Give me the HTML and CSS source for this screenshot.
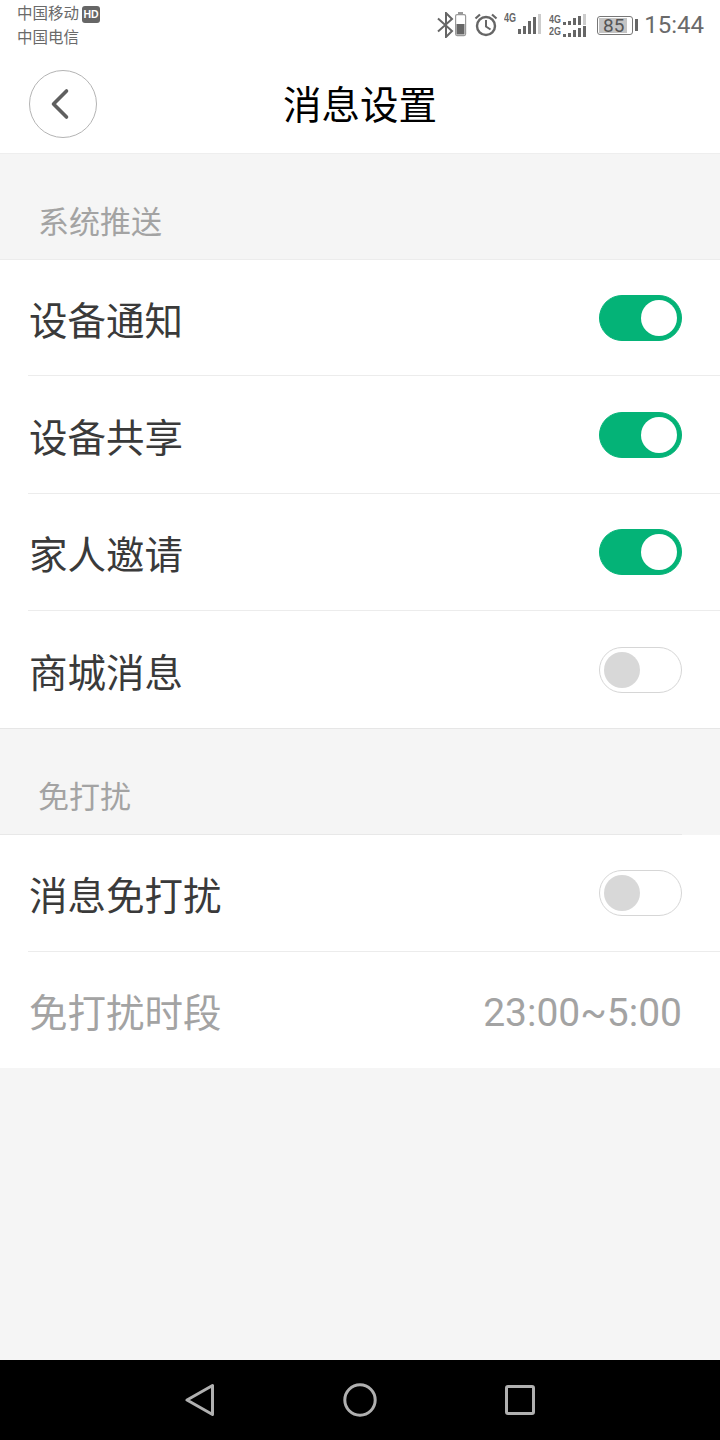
FILE: index.html
```html
<!DOCTYPE html>
<html lang="zh-CN">
<head>
    <meta charset="UTF-8">
    <meta name="viewport" content="width=device-width, initial-scale=1.0">
    <title>消息设置</title>
    <link rel="stylesheet" href="styles.css">
</head>
<body>
<div class="screen">

    <!-- Status bar -->
    <div class="status-bar">
        <div class="carriers">
            <div class="carrier">中国移动<span class="hd">HD</span></div>
            <div class="carrier">中国电信</div>
        </div>
        <div class="status-right">
            <svg class="st-icon" width="32" height="26" viewBox="0 0 32 26">
                <path d="M2 6.500L16 19l-6 6V1l6 6L2 19.500" fill="none" stroke="#666" stroke-width="2"/>
                <rect x="19.600" y="2.600" width="10" height="21" rx="1.500" fill="none" stroke="#999" stroke-width="1.200"/>
                <rect x="22" y="0" width="5" height="2" fill="#999"/>
                <rect x="20.500" y="12" width="8" height="10.500" fill="#666"/>
            </svg>
            <svg class="st-icon alarm" width="24" height="26" viewBox="0 0 24 26">
                <circle cx="12" cy="14" r="9" fill="none" stroke="#666" stroke-width="2.400"/>
                <path d="M12 8V14.500L16.500 17.500" fill="none" stroke="#666" stroke-width="2"/>
                <path d="M1.500 6.500L6 2.500M22.500 6.500L18 2.500" fill="none" stroke="#666" stroke-width="2.200"/>
            </svg>
            <div class="signal sig-single">
                <span class="net">4G</span>
                <svg width="24" height="24" viewBox="0 0 24 24">
                    <rect x="0" y="16" width="3" height="5" fill="#666"/>
                    <rect x="5" y="13" width="3" height="8" fill="#666"/>
                    <rect x="10" y="8" width="3" height="13" fill="#666"/>
                    <rect x="15" y="4" width="3" height="17" fill="#666"/>
                    <rect x="20" y="1" width="3" height="20" fill="#ccc"/>
                </svg>
            </div>
            <div class="signal sig-double">
                <div class="sig-row">
                    <span class="net">4G</span>
                    <svg width="26" height="11" viewBox="0 0 26 11">
                        <rect x="1" y="8" width="3" height="3" fill="#666"/>
                        <rect x="6" y="7" width="3" height="4" fill="#666"/>
                        <rect x="11" y="4" width="3" height="7" fill="#666"/>
                        <rect x="16" y="2" width="3" height="9" fill="#666"/>
                        <rect x="21" y="0" width="3" height="11" fill="#ccc"/>
                    </svg>
                </div>
                <div class="sig-row">
                    <span class="net">2G</span>
                    <svg width="26" height="11" viewBox="0 0 26 11">
                        <rect x="1" y="8" width="3" height="3" fill="#666"/>
                        <rect x="6" y="7" width="3" height="4" fill="#666"/>
                        <rect x="11" y="4" width="3" height="7" fill="#666"/>
                        <rect x="16" y="2" width="3" height="9" fill="#666"/>
                        <rect x="21" y="0" width="3" height="11" fill="#666"/>
                    </svg>
                </div>
            </div>
            <div class="battery">
                <div class="battery-body">
                    <div class="battery-fill"></div>
                    <span class="battery-num">85</span>
                </div>
                <div class="battery-tip"></div>
            </div>
            <span class="clock">15:44</span>
        </div>
    </div>

    <!-- Header -->
    <div class="header">
        <div class="back-btn">
            <svg width="20" height="32" viewBox="0 0 20 32">
                <path d="M16.500 3L3.500 16l13 13" fill="none" stroke="#5f5f5f" stroke-width="3.600" stroke-linecap="round" stroke-linejoin="round"/>
            </svg>
        </div>
        <h1 class="title">消息设置</h1>
    </div>

    <!-- Content -->
    <div class="content">
        <div class="section-title">系统推送</div>
        <div class="group">
            <div class="row"><span class="row-label">设备通知</span><div class="switch on"></div></div>
            <div class="row"><span class="row-label">设备共享</span><div class="switch on"></div></div>
            <div class="row"><span class="row-label">家人邀请</span><div class="switch on"></div></div>
            <div class="row last"><span class="row-label">商城消息</span><div class="switch"></div></div>
        </div>

        <div class="section-title">免打扰</div>
        <div class="section-line"></div>
        <div class="group second">
            <div class="row"><span class="row-label">消息免打扰</span><div class="switch"></div></div>
            <div class="row last muted"><span class="row-label">免打扰时段</span><span class="row-value">23:00~5:00</span></div>
        </div>
    </div>

    <!-- Navigation bar -->
    <div class="nav-bar">
        <svg width="30" height="34" viewBox="0 0 30 34">
            <path d="M27.500 2.500V31.500L2 17Z" fill="none" stroke="#b0b0b0" stroke-width="3" stroke-linejoin="round"/>
        </svg>
        <svg width="34" height="34" viewBox="0 0 34 34">
            <circle cx="17" cy="17" r="15.200" fill="none" stroke="#b0b0b0" stroke-width="3"/>
        </svg>
        <svg width="30" height="30" viewBox="0 0 30 30">
            <rect x="1.500" y="1.500" width="27" height="27" rx="1.500" fill="none" stroke="#b0b0b0" stroke-width="3"/>
        </svg>
    </div>
</div>
</body>
</html>
```

FILE: styles.css
```css
body {
    margin: 0;
    padding: 0;
    background-color: #f5f5f5;
    font-family: "Liberation Sans", "Noto Sans CJK SC", sans-serif;
}

.screen {
    width: 720px;
    height: 1440px;
    display: flex;
    flex-direction: column;
    overflow: hidden;
}

/* Status bar */
.status-bar {
    height: 50px;
    background-color: #fff;
    display: flex;
    justify-content: space-between;
    padding: 0 16px 0 17px;
    box-sizing: border-box;
}

.carriers {
    padding-top: 2px;
    color: #6a6a6a;
    font-size: 15.500px;
    line-height: 24px;
}

.carrier {
    display: flex;
    align-items: center;
}

.hd {
    margin-left: 3px;
    width: 18px;
    height: 17px;
    background-color: #666;
    color: #fff;
    border-radius: 3px;
    font-size: 10.500px;
    font-weight: bold;
    line-height: 17px;
    text-align: center;
}

.status-right {
    display: flex;
    align-items: center;
    height: 50px;
}

.st-icon {
    display: block;
}

.alarm {
    margin-left: 6px;
}

.signal {
    color: #666;
}

.sig-single {
    display: flex;
    margin-left: 6px;
    height: 24px;
}

.sig-double {
    margin-left: 7px;
}

.sig-row {
    display: flex;
    height: 12px;
    align-items: center;
}

.net {
    display: block;
    width: 13px;
    font-family: "Liberation Sans", sans-serif;
    font-size: 12px;
    font-weight: bold;
    line-height: 11px;
    transform: scaleX(0.75);
    transform-origin: left center;
}

.sig-double .net {
    font-size: 10.500px;
    transform: scaleX(0.85);
}

.sig-single .net {
    width: 14px;
    align-self: flex-start;
}

.battery {
    display: flex;
    align-items: center;
    margin-left: 9px;
}

.battery-body {
    position: relative;
    width: 32px;
    height: 15px;
    border: 1px solid #777;
    border-radius: 3px;
    padding: 1px;
}

.battery-fill {
    width: 28px;
    height: 15px;
    background-color: #c4c4c4;
}

.battery-num {
    position: absolute;
    left: 0;
    right: 3px;
    top: 0;
    text-align: center;
    color: #555;
    font-family: Roboto, sans-serif;
    font-size: 19px;
    line-height: 18px;
}

.battery-tip {
    width: 3px;
    height: 12px;
    margin-left: 2px;
    background-color: #666;
}

.clock {
    margin-left: 6px;
    color: #6a6a6a;
    font-family: Roboto, sans-serif;
    font-size: 24px;
}

/* Header */
.header {
    position: relative;
    height: 103px;
    background-color: #fff;
    border-bottom: 1px solid #eee;
    display: flex;
    align-items: center;
    justify-content: center;
}

.back-btn {
    position: absolute;
    left: 29px;
    top: 20px;
    width: 66px;
    height: 66px;
    border: 1px solid #b4b4b4;
    border-radius: 50%;
    display: flex;
    align-items: center;
    justify-content: center;
}

.back-btn svg {
    margin-left: -6px;
}

.title {
    margin: 0;
    color: #000;
    font-size: 38.500px;
    font-weight: normal;
}

/* Content */
.content {
    flex: 1;
    background-color: #f5f5f5;
}

.section-title {
    height: 105px;
    color: #a3a3a3;
    font-size: 31px;
    line-height: 138px;
    padding-left: 38px;
    box-sizing: border-box;
}

.section-line {
    width: 682px;
    height: 1px;
    background-color: #e8e8e8;
}

.group {
    background-color: #fff;
    box-shadow: inset 0 1px #ececec;
    border-bottom: 1px solid #e6e6e6;
}

.group.second {
    box-shadow: none;
    border-bottom: none;
}

.row {
    height: 117.400px;
    margin-left: 28px;
    padding-right: 38px;
    box-sizing: border-box;
    display: flex;
    align-items: center;
    justify-content: space-between;
    border-bottom: 1px solid #ececec;
}

.group:not(.second) .row:first-child {
    padding-top: 1px;
}

.row.last {
    height: 116.800px;
    border-bottom: none;
}

.group.second .row {
    height: 117px;
}

.group.second .row.last {
    height: 116px;
}

.row-label {
    margin-left: 1px;
    color: #3a3a3a;
    font-size: 38.500px;
}

.muted .row-label,
.row-value {
    color: #a3a3a3;
}

.row-value {
    padding-top: 7px;
    font-family: Roboto, sans-serif;
    font-size: 39px;
}

/* Switches */
.switch {
    position: relative;
    width: 83px;
    height: 46px;
    border: 1px solid #d6d6d6;
    border-radius: 23px;
    box-sizing: border-box;
    background-color: #fff;
}

.switch::after {
    content: "";
    position: absolute;
    left: 4px;
    top: 4px;
    width: 36px;
    height: 36px;
    border-radius: 50%;
    background-color: #d8d8d8;
}

.switch.on {
    border-color: #04b377;
    background-color: #04b377;
}

.switch.on::after {
    left: 41px;
    background-color: #fff;
}

/* Navigation bar */
.nav-bar {
    height: 80px;
    background-color: #000;
    display: flex;
    align-items: center;
    justify-content: center;
    gap: 128px;
}
```
